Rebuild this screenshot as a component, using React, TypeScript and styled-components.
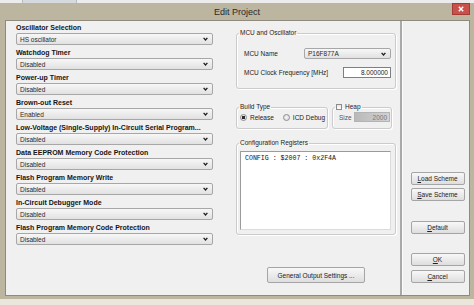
import React from 'react';
import styled, { createGlobalStyle } from 'styled-components';

const GlobalStyle = createGlobalStyle`
  html, body { margin: 0; padding: 0; background: #e9e6dc; }
  body { font-family: "Liberation Sans", Arial, sans-serif; color: #1a1a1a; }
`;

const Window = styled.div`
  width: 474px;
  height: 305px;
  background: #bcb59f;
  display: flex;
  flex-direction: column;
  overflow: hidden;
`;

const TopStrip = styled.div`
  height: 3px;
  background: #ececec;
  display: flex;
`;

const TopTab = styled.div`
  margin-left: 22px;
  width: 53px;
  background: #d6d9de;
  border-left: 1px solid #b8bcc2;
  border-right: 1px solid #b8bcc2;
`;

const TitleBar = styled.div`
  height: 17px;
  display: grid;
  grid-template-columns: 1fr auto 1fr;
  align-items: center;
`;

const Title = styled.div`
  grid-column: 2;
  font-size: 9px;
  color: #2a2a2a;
`;

const CloseButton = styled.div`
  grid-column: 3;
  justify-self: end;
  align-self: start;
  width: 18px;
  height: 12px;
  margin-right: 4px;
  background: #c9504b;
  border: 1px solid #a33a36;
  box-sizing: border-box;
  display: flex;
  align-items: center;
  justify-content: center;
`;

const Client = styled.div`
  height: 276px;
  margin: 0 4px 0 5px;
  box-sizing: border-box;
  border: 1px solid #8e8a7e;
  background: #f0f0f0;
  display: flex;
`;

const MainArea = styled.div`
  width: 394px;
  display: grid;
  grid-template-columns: 197px 160px;
  column-gap: 23px;
  padding-left: 10px;
  box-sizing: border-box;
`;

const Divider = styled.div`
  width: 2px;
  background: #a9a9a9;
  border-right: 1px solid #fafafa;
`;

const ButtonPanel = styled.div`
  flex: 1;
  display: flex;
  flex-direction: column;
  align-items: center;
  padding-top: 151px;
  padding-left: 3px;
`;

const FieldColumn = styled.div`
  padding-top: 2px;
  display: flex;
  flex-direction: column;
`;

const Field = styled.div`
  height: 25px;
`;

const FieldLabel = styled.div`
  font-size: 7px;
  font-weight: bold;
  line-height: 10px;
  white-space: nowrap;
  color: #151515;
`;

const SelectBox = styled.div<{ $w?: number; $h?: number }>`
  width: ${(p) => (p.$w ? `${p.$w}px` : '100%')};
  height: ${(p) => p.$h ?? 12}px;
  box-sizing: border-box;
  border: 1px solid #a7a7a7;
  border-radius: 2px;
  background: linear-gradient(#f7f7f7, #e1e1e1);
  display: flex;
  align-items: center;
  justify-content: space-between;
  padding: 0 4px 0 3px;
  font-size: 6.5px;
  color: #2a2a2a;
`;

const RightColumn = styled.div`
  display: flex;
  flex-direction: column;
`;

const Group = styled.fieldset<{ $w?: number; $mt: number }>`
  margin: ${(p) => p.$mt}px 0 0 0;
  padding: 0;
  width: ${(p) => (p.$w ? `${p.$w}px` : 'auto')};
  box-sizing: border-box;
  min-width: 0;
  border: 1px solid #cbcbcb;
  border-radius: 3px;
  box-shadow: inset 1px 1px 0 #ffffff, 1px 1px 0 #ffffff;
`;

const Legend = styled.legend`
  margin-left: 2px;
  padding: 0 1px;
  font-size: 6.5px;
  line-height: 8px;
  color: #222;
  display: flex;
  align-items: center;
  gap: 3px;
`;

const McuBody = styled.div`
  padding: 11px 4px 10px 7px;
  display: flex;
  flex-direction: column;
  gap: 8px;
`;

const McuRow = styled.div`
  height: 11px;
  display: flex;
  align-items: center;
  justify-content: space-between;
`;

const SmallText = styled.span<{ $muted?: boolean }>`
  font-size: 6.5px;
  color: ${(p) => (p.$muted ? '#555' : '#222')};
  white-space: nowrap;
`;

const TextInput = styled.div<{ $w: number; $disabled?: boolean }>`
  width: ${(p) => p.$w}px;
  height: ${(p) => (p.$disabled ? 10 : 11)}px;
  box-sizing: border-box;
  border: 1px solid ${(p) => (p.$disabled ? '#b4b4b4' : '#7f7f7f')};
  background: ${(p) => (p.$disabled ? 'linear-gradient(90deg, #b9b9b9, #d2d2d2)' : '#ffffff')};
  color: ${(p) => (p.$disabled ? '#777' : '#1a1a1a')};
  font-size: 6.5px;
  display: flex;
  align-items: center;
  justify-content: flex-end;
  padding-right: 2px;
`;

const BuildRow = styled.div`
  display: flex;
  gap: 4px;
  margin-top: 14px;
`;

const RadioRow = styled.div`
  height: 10px;
  padding: 1px 0 6px 3px;
  display: flex;
  align-items: center;
  gap: 9px;
`;

const RadioItem = styled.label`
  display: flex;
  align-items: center;
  gap: 3px;
`;

const RadioDot = styled.span<{ $on?: boolean }>`
  width: 7px;
  height: 7px;
  box-sizing: border-box;
  border-radius: 50%;
  border: 1px solid #8c8c8c;
  background: radial-gradient(circle, ${(p) => (p.$on ? '#2c2c2c 0 1.6px, #e8e8e8 2px' : '#f4f4f4 0, #dcdcdc 3px')});
`;

const CheckSquare = styled.span`
  width: 6px;
  height: 6px;
  box-sizing: border-box;
  border: 1px solid #8c8c8c;
  background: linear-gradient(#e6e6e6, #ffffff);
`;

const HeapBody = styled.div`
  height: 10px;
  padding: 1px 1px 6px 6px;
  display: flex;
  align-items: center;
  justify-content: space-between;
`;

const ConfigBody = styled.div`
  padding: 4px 4px 4px 3px;
`;

const ConfigText = styled.div`
  height: 79px;
  box-sizing: border-box;
  background: #ffffff;
  border: 1px solid #9b9b9b;
  border-right-color: #dcdcdc;
  border-bottom-color: #dcdcdc;
  padding: 3px 4px;
  font-family: "Liberation Mono", "Courier New", monospace;
  font-size: 6.6px;
  line-height: 8px;
  color: #111;
  white-space: pre;
`;

const PushButton = styled.button<{ $w?: number; $h?: number; $mt?: number }>`
  width: ${(p) => p.$w ?? 54}px;
  height: ${(p) => p.$h ?? 13}px;
  margin-top: ${(p) => p.$mt ?? 0}px;
  box-sizing: border-box;
  padding: 0;
  border: 1px solid #a5a5a5;
  border-radius: 2px;
  background: linear-gradient(#f8f8f8, #dedede);
  font-family: "Liberation Sans", Arial, sans-serif;
  font-size: 6.5px;
  color: #222;
  align-self: ${(p) => (p.$w && p.$w > 60 ? 'center' : 'auto')};
  u { text-decoration: underline; }
`;

const BottomEdge = styled.div`
  height: 9px;
  background: linear-gradient(#bcb59f 0 3px, #e9e6dc 3px);
`;

const Chevron: React.FC = () => (
  <svg width="5" height="4" viewBox="0 0 5 4">
    <path d="M0.6 0.8 L2.5 3 L4.4 0.8" fill="none" stroke="#1e1e1e" strokeWidth="1.3" />
  </svg>
);

const CloseGlyph: React.FC = () => (
  <svg width="6" height="6" viewBox="0 0 6 6">
    <path d="M0.8 0.8 L5.2 5.2 M5.2 0.8 L0.8 5.2" stroke="#ffffff" strokeWidth="1.4" />
  </svg>
);

const fields: { label: string; value: string }[] = [
  { label: 'Oscillator Selection', value: 'HS oscillator' },
  { label: 'Watchdog Timer', value: 'Disabled' },
  { label: 'Power-up Timer', value: 'Disabled' },
  { label: 'Brown-out Reset', value: 'Enabled' },
  { label: 'Low-Voltage (Single-Supply) In-Circuit Serial Program...', value: 'Disabled' },
  { label: 'Data EEPROM Memory Code Protection', value: 'Disabled' },
  { label: 'Flash Program Memory Write', value: 'Disabled' },
  { label: 'In-Circuit Debugger Mode', value: 'Disabled' },
  { label: 'Flash Program Memory Code Protection', value: 'Disabled' },
];

const App: React.FC = () => {
  return (
    <React.Fragment>
      <GlobalStyle />
      <Window>
        <TopStrip><TopTab /></TopStrip>
        <TitleBar>
          <Title>Edit Project</Title>
          <CloseButton><CloseGlyph /></CloseButton>
        </TitleBar>
        <Client>
          <MainArea>
            <FieldColumn>
              {fields.map((f) => (
                <Field key={f.label}>
                  <FieldLabel>{f.label}</FieldLabel>
                  <SelectBox>
                    <span>{f.value}</span>
                    <Chevron />
                  </SelectBox>
                </Field>
              ))}
            </FieldColumn>
            <RightColumn>
              <Group $mt={8}>
                <Legend>MCU and Oscillator</Legend>
                <McuBody>
                  <McuRow>
                    <SmallText>MCU Name</SmallText>
                    <SelectBox $w={87} $h={11}>
                      <span>P16F877A</span>
                      <Chevron />
                    </SelectBox>
                  </McuRow>
                  <McuRow>
                    <SmallText>MCU Clock Frequency [MHz]</SmallText>
                    <TextInput $w={48}>8.000000</TextInput>
                  </McuRow>
                </McuBody>
              </Group>
              <BuildRow>
                <Group $mt={0} $w={92}>
                  <Legend>Build Type</Legend>
                  <RadioRow>
                    <RadioItem>
                      <RadioDot $on />
                      <SmallText>Release</SmallText>
                    </RadioItem>
                    <RadioItem>
                      <RadioDot />
                      <SmallText>ICD Debug</SmallText>
                    </RadioItem>
                  </RadioRow>
                </Group>
                <Group $mt={0} $w={60}>
                  <Legend>
                    <CheckSquare />
                    Heap
                  </Legend>
                  <HeapBody>
                    <SmallText $muted>Size</SmallText>
                    <TextInput $w={36} $disabled>2000</TextInput>
                  </HeapBody>
                </Group>
              </BuildRow>
              <Group $mt={10}>
                <Legend>Configuration Registers</Legend>
                <ConfigBody>
                  <ConfigText>CONFIG : $2007 : 0x2F4A</ConfigText>
                </ConfigBody>
              </Group>
              <PushButton $w={98} $h={16} $mt={32}>General Output Settings ...</PushButton>
            </RightColumn>
          </MainArea>
          <Divider />
          <ButtonPanel>
            <PushButton><u>L</u>oad Scheme</PushButton>
            <PushButton $mt={3}><u>S</u>ave Scheme</PushButton>
            <PushButton $mt={20}><u>D</u>efault</PushButton>
            <PushButton $mt={19}><u>O</u>K</PushButton>
            <PushButton $mt={4}><u>C</u>ancel</PushButton>
          </ButtonPanel>
        </Client>
        <BottomEdge />
      </Window>
    </React.Fragment>
  );
};

export default App;
